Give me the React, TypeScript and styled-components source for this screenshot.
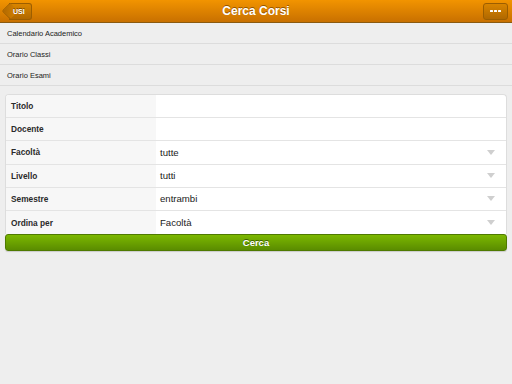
import React from 'react';
import styled, { createGlobalStyle } from 'styled-components';

const GlobalStyle = createGlobalStyle`
  html, body {
    margin: 0;
    padding: 0;
    background: #eeeeee;
    font-family: 'Liberation Sans', Arial, sans-serif;
  }
`;

const Page = styled.div`
  width: 512px;
  height: 384px;
  background: #eeeeee;
  display: flex;
  flex-direction: column;
`;

const Header = styled.header`
  height: 23px;
  box-sizing: border-box;
  display: flex;
  align-items: center;
  justify-content: space-between;
  padding: 0 4px;
  background: linear-gradient(#f29400, #c87000);
  border-bottom: 1px solid #8a5a10;
  position: relative;
`;

const Title = styled.h1`
  position: absolute;
  left: 0;
  right: 0;
  text-align: center;
  margin: 0;
  font-size: 12px;
  font-weight: bold;
  color: #ffffff;
  text-shadow: 0 -1px 0 #955400;
  pointer-events: none;
`;

const BackButton = styled.button`
  position: relative;
  z-index: 0;
  height: 17px;
  margin-left: 5px;
  padding: 0 6px 0 4px;
  border: 1px solid #9c5e00;
  border-left: none;
  border-radius: 0 3px 3px 0;
  background: linear-gradient(#d98500, #b06800);
  color: #fff;
  font-family: inherit;
  font-size: 7px;
  font-weight: bold;
  text-shadow: 0 -1px 0 #7a4a00;

  &::before {
    content: '';
    position: absolute;
    left: -5.5px;
    top: 1.8px;
    width: 11px;
    height: 11px;
    background: linear-gradient(45deg, #b06800, #d98500);
    border-left: 1px solid #9c5e00;
    border-bottom: 1px solid #9c5e00;
    border-radius: 0 0 0 2px;
    transform: rotate(45deg);
    z-index: -1;
  }
`;

const BackLabel = styled.span`
  position: relative;
`;

const MoreButton = styled.button`
  width: 25px;
  height: 17px;
  padding: 0;
  border: 1px solid #9c5e00;
  border-radius: 3px;
  background: linear-gradient(#d98500, #b06800);
  display: flex;
  align-items: center;
  justify-content: center;
  gap: 1.5px;
`;

const Dot = styled.span`
  width: 2.5px;
  height: 2.5px;
  background: #fff;
  border-radius: 0.5px;
`;

const MenuList = styled.ul`
  list-style: none;
  margin: 0;
  padding: 0;
`;

const MenuItem = styled.li`
  height: 21px;
  box-sizing: border-box;
  display: flex;
  align-items: center;
  padding: 1px 0 0 7px;
  font-size: 7.5px;
  color: #222;
  border-bottom: 1px solid #dcdcdc;
`;

const Card = styled.div`
  margin: 8px 5px 0;
  background: #ffffff;
  border: 1px solid #dddddd;
  border-bottom: none;
  border-radius: 4px 4px 0 0;
  overflow: hidden;
`;

const Row = styled.div`
  display: grid;
  grid-template-columns: 150px 1fr;
  height: 23.2px;
  box-sizing: border-box;
  border-bottom: 1px solid #e4e4e4;

  &:last-child {
    border-bottom: none;
  }
`;

const Label = styled.div`
  background: #f7f7f7;
  display: flex;
  align-items: center;
  padding-left: 5px;
  font-size: 8.3px;
  font-weight: bold;
  color: #2a2a2a;
`;

const Value = styled.div`
  display: flex;
  align-items: center;
  justify-content: space-between;
  padding: 0 11px 0 4px;
  font-size: 9.6px;
  color: #1a1a1a;
`;

const Caret = styled.span`
  width: 0;
  height: 0;
  border-left: 4px solid transparent;
  border-right: 4px solid transparent;
  border-top: 5px solid #cfcfcf;
`;

const SearchButton = styled.button`
  margin: 0 5px;
  height: 17px;
  border: 1px solid #4f7a00;
  border-radius: 3px;
  background: linear-gradient(#7cb800, #5a8c00);
  color: #fff;
  font-family: inherit;
  font-size: 9.5px;
  font-weight: bold;
  text-shadow: 0 -1px 0 #3d6100;
  box-shadow: 0 1px 1px rgba(0, 0, 0, 0.15);
`;

const fields: { label: string; value?: string }[] = [
  { label: 'Titolo' },
  { label: 'Docente' },
  { label: 'Facoltà', value: 'tutte' },
  { label: 'Livello', value: 'tutti' },
  { label: 'Semestre', value: 'entrambi' },
  { label: 'Ordina per', value: 'Facoltà' },
];

export default function App() {
  return (
    <Page>
      <GlobalStyle />
      <Header>
        <BackButton>
          <BackLabel>USI</BackLabel>
        </BackButton>
        <Title>Cerca Corsi</Title>
        <MoreButton>
          <Dot />
          <Dot />
          <Dot />
        </MoreButton>
      </Header>

      <MenuList>
        <MenuItem>Calendario Academico</MenuItem>
        <MenuItem>Orario Classi</MenuItem>
        <MenuItem>Orario Esami</MenuItem>
      </MenuList>

      <Card>
        {fields.map((f) => (
          <Row key={f.label}>
            <Label>{f.label}</Label>
            <Value>
              <span>{f.value}</span>
              {f.value && <Caret />}
            </Value>
          </Row>
        ))}
      </Card>
      <SearchButton>Cerca</SearchButton>
    </Page>
  );
}
